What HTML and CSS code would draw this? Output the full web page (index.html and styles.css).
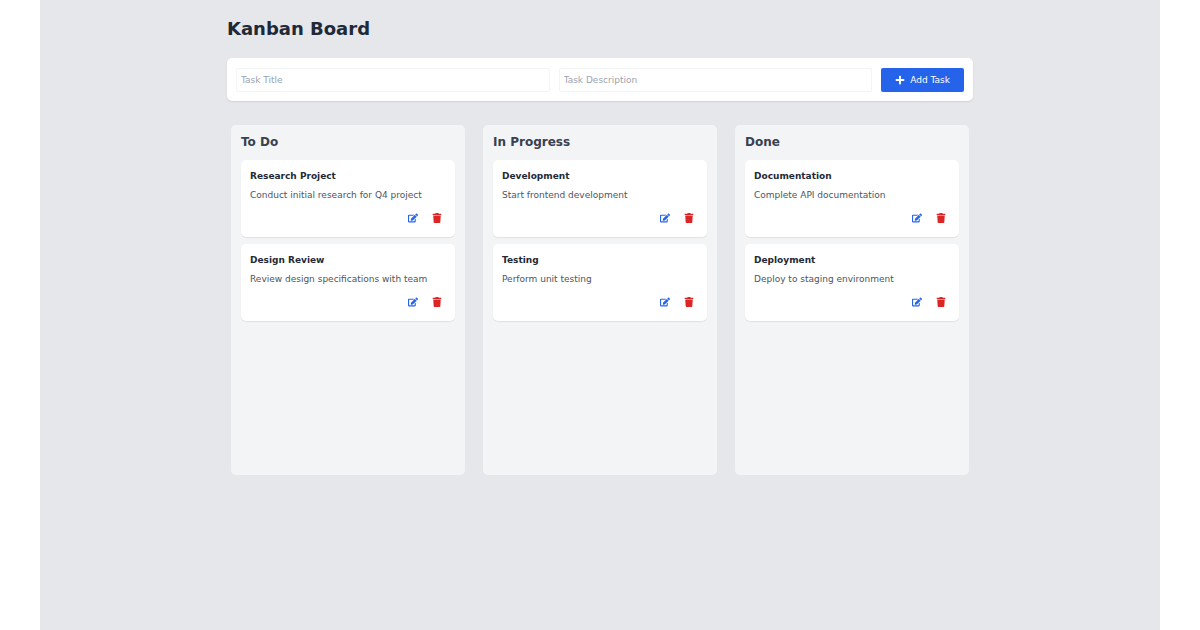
FILE: index.html
```
<!DOCTYPE html>
<html lang="en">
<head>
<meta charset="UTF-8">
<meta name="viewport" content="width=device-width, initial-scale=1.0">
<title>Kanban Board</title>
<link rel="stylesheet" href="styles.css">
</head>
<body>
<svg class="sprite" aria-hidden="true">
    <symbol id="icon-plus" viewBox="0 0 448 512"><path d="M416 208H272V64c0-17.67-14.33-32-32-32h-32c-17.67 0-32 14.33-32 32v144H32c-17.67 0-32 14.33-32 32v32c0 17.67 14.33 32 32 32h144v144c0 17.67 14.33 32 32 32h32c17.67 0 32-14.33 32-32V304h144c17.67 0 32-14.33 32-32v-32c0-17.67-14.33-32-32-32z"/></symbol>
    <symbol id="icon-edit" viewBox="0 0 576 512"><path d="M402.6 83.2l90.2 90.2c3.8 3.8 3.8 10 0 13.8L274.4 405.6l-92.8 10.3c-12.4 1.4-22.9-9.1-21.5-21.5l10.3-92.8L388.8 83.2c3.8-3.8 10-3.8 13.8 0zm162-22.9l-48.8-48.8c-15.2-15.2-39.9-15.2-55.2 0l-35.4 35.4c-3.8 3.8-3.8 10 0 13.8l90.2 90.2c3.8 3.8 10 3.8 13.8 0l35.4-35.4c15.2-15.3 15.2-40 0-55.2zM384 346.2V448H64V128h229.8c3.2 0 6.2-1.3 8.5-3.5l40-40c7.6-7.6 2.2-20.5-8.5-20.5H48C21.5 64 0 85.5 0 112v352c0 26.5 21.5 48 48 48h352c26.5 0 48-21.5 48-48V306.2c0-10.7-12.9-16-20.5-8.5l-40 40c-2.2 2.3-3.5 5.3-3.5 8.5z"/></symbol>
    <symbol id="icon-trash" viewBox="0 0 448 512"><path d="M432 32H312l-9.4-18.7A24 24 0 0 0 281.1 0H166.8a23.72 23.72 0 0 0-21.4 13.3L136 32H16A16 16 0 0 0 0 48v32a16 16 0 0 0 16 16h416a16 16 0 0 0 16-16V48a16 16 0 0 0-16-16zM53.2 467a48 48 0 0 0 47.9 45h245.8a48 48 0 0 0 47.9-45L416 128H32z"/></symbol>
</svg>

<div class="page">
<div class="container">
    <h1>Kanban Board</h1>

    <form id="taskForm" class="task-form">
        <input type="text" id="title" placeholder="Task Title" aria-label="Task Title">
        <input type="text" id="description" placeholder="Task Description" aria-label="Task Description">
        <button type="button" class="add-btn"><svg class="icon"><use href="#icon-plus"/></svg>Add Task</button>
    </form>

    <div class="board">
        <section class="column">
            <h2>To Do</h2>
            <div class="card">
                <h3>Research Project</h3>
                <p>Conduct initial research for Q4 project</p>
                <div class="actions">
                    <button type="button" class="edit" aria-label="Edit task"><svg class="icon"><use href="#icon-edit"/></svg></button>
                    <button type="button" class="delete" aria-label="Delete task"><svg class="icon"><use href="#icon-trash"/></svg></button>
                </div>
            </div>
            <div class="card">
                <h3>Design Review</h3>
                <p>Review design specifications with team</p>
                <div class="actions">
                    <button type="button" class="edit" aria-label="Edit task"><svg class="icon"><use href="#icon-edit"/></svg></button>
                    <button type="button" class="delete" aria-label="Delete task"><svg class="icon"><use href="#icon-trash"/></svg></button>
                </div>
            </div>
        </section>

        <section class="column">
            <h2>In Progress</h2>
            <div class="card">
                <h3>Development</h3>
                <p>Start frontend development</p>
                <div class="actions">
                    <button type="button" class="edit" aria-label="Edit task"><svg class="icon"><use href="#icon-edit"/></svg></button>
                    <button type="button" class="delete" aria-label="Delete task"><svg class="icon"><use href="#icon-trash"/></svg></button>
                </div>
            </div>
            <div class="card">
                <h3>Testing</h3>
                <p>Perform unit testing</p>
                <div class="actions">
                    <button type="button" class="edit" aria-label="Edit task"><svg class="icon"><use href="#icon-edit"/></svg></button>
                    <button type="button" class="delete" aria-label="Delete task"><svg class="icon"><use href="#icon-trash"/></svg></button>
                </div>
            </div>
        </section>

        <section class="column">
            <h2>Done</h2>
            <div class="card">
                <h3>Documentation</h3>
                <p>Complete API documentation</p>
                <div class="actions">
                    <button type="button" class="edit" aria-label="Edit task"><svg class="icon"><use href="#icon-edit"/></svg></button>
                    <button type="button" class="delete" aria-label="Delete task"><svg class="icon"><use href="#icon-trash"/></svg></button>
                </div>
            </div>
            <div class="card">
                <h3>Deployment</h3>
                <p>Deploy to staging environment</p>
                <div class="actions">
                    <button type="button" class="edit" aria-label="Edit task"><svg class="icon"><use href="#icon-edit"/></svg></button>
                    <button type="button" class="delete" aria-label="Delete task"><svg class="icon"><use href="#icon-trash"/></svg></button>
                </div>
            </div>
        </section>
    </div>
</div>
</div>
</body>
</html>
```
FILE: styles.css
```
* {
    box-sizing: border-box;
}

body {
    margin: 0;
    padding: 0 40px;
    background-color: #fff;
    font-family: "DejaVu Sans", sans-serif;
    font-size: 9px;
    line-height: 14px;
    color: #1f2937;
}

h1, h2, h3, p {
    margin: 0;
}

.sprite {
    display: none;
}

.page {
    min-height: 100vh;
    padding: 18px;
    background-color: #e5e7eb;
}

.container {
    max-width: 746px;
    margin: 0 auto;
}

h1 {
    margin-bottom: 18px;
    font-size: 18px;
    line-height: 22px;
}

.task-form {
    display: flex;
    gap: 9px;
    margin-bottom: 24px;
    padding: 10px 9px 9px;
    background-color: #fff;
    border-radius: 5px;
    box-shadow: 0 1px 2px rgba(0, 0, 0, 0.1);
}

.task-form input {
    flex: 1;
    min-width: 0;
    height: 24px;
    padding: 0 4px;
    border: 1px solid #f3f4f6;
    border-radius: 2px;
    font: inherit;
    color: inherit;
}

.task-form input::placeholder {
    color: #9ca3af;
}

.icon {
    display: block;
    width: 10px;
    height: 10px;
    fill: currentColor;
}

button {
    border: none;
    font: inherit;
    cursor: pointer;
}

.add-btn {
    display: flex;
    align-items: center;
    justify-content: center;
    gap: 5px;
    padding: 0 14px;
    background-color: #2563eb;
    border-radius: 2px;
    color: #fff;
}

.add-btn:hover {
    background-color: #1d4ed8;
}

.board {
    display: grid;
    grid-template-columns: repeat(3, 1fr);
    gap: 18px;
    padding: 0 4px;
}

.column {
    min-height: 350px;
    padding: 9px 10px;
    background-color: #f3f4f6;
    border-radius: 5px;
}

h2 {
    margin-bottom: 9px;
    font-size: 12px;
    line-height: 17px;
    color: #374151;
}

.card {
    margin-bottom: 7px;
    padding: 9px;
    background-color: #fff;
    border-radius: 5px;
    box-shadow: 0 1px 1px rgba(0, 0, 0, 0.08);
}

h3 {
    margin-bottom: 5px;
    font-size: 9px;
    line-height: 14px;
}

.card p {
    margin-bottom: 6px;
    color: #4b5563;
}

.actions {
    display: flex;
    justify-content: flex-end;
    gap: 6px;
}

.actions button {
    padding: 5px 4px;
    background: none;
}

.edit {
    color: #2563eb;
}

.delete {
    color: #dc2626;
}
```
